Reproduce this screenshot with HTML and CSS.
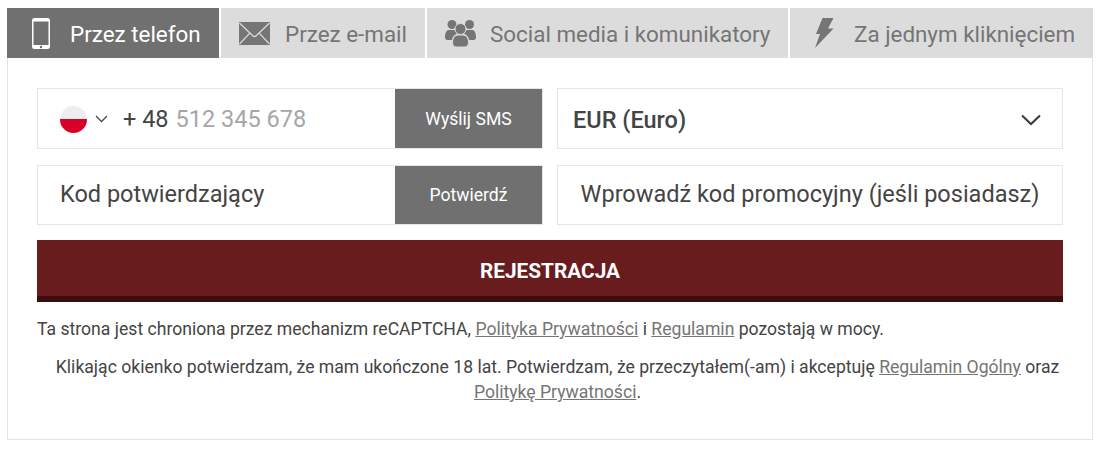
FILE: index.html
```html
<!DOCTYPE html>
<html lang="pl">
<head>
<meta charset="utf-8">
<title>Rejestracja</title>
<link rel="stylesheet" href="styles.css">
</head>
<body>
<div class="widget">
  <nav class="tabs">
    <a class="tab tab-phone active">
      <svg class="ico" width="18" height="31" viewBox="0 0 18 31"><path fill="#fff" fill-rule="evenodd" d="M2.500 0h13A2.500 2.500 0 0 1 18 2.500v26a2.500 2.500 0 0 1-2.500 2.500h-13A2.500 2.500 0 0 1 0 28.500v-26A2.500 2.500 0 0 1 2.500 0zM1.500 3.500v23.500h15V3.500zM9 27.800a1.200 1.200 0 1 0 0 2.400a1.200 1.200 0 0 0 0-2.400z"/></svg>
      <span>Przez telefon</span>
    </a>
    <a class="tab tab-mail">
      <svg class="ico" width="31" height="23" viewBox="0 0 31 23"><rect width="31" height="23" fill="#757575"/><path fill="none" stroke="#dcdcdc" stroke-width="1.200" d="M0.500 1L13.500 13.500Q15.500 15.500 17.500 13.500L30.500 1M0.500 22L10.800 11.200M30.500 22L20.200 11.200"/></svg>
      <span>Przez e-mail</span>
    </a>
    <a class="tab tab-social">
      <svg class="ico" width="31" height="27" viewBox="0 0 31 27"><g fill="#757575"><circle cx="7" cy="4.500" r="4.500"/><circle cx="24.500" cy="4.500" r="4.500"/><path d="M0 17.500C0 12.500 1.500 10 4 10h6c.3 1.500 1 2.800 2 3.800C9 15 7.300 17 6.800 20H2.500C1 20 0 19 0 17.500z"/><path d="M31 17.500C31 12.500 29.500 10 27 10h-6c-.3 1.500-1 2.800-2 3.800 3 1.200 4.700 3.200 5.200 6.200h4.300c1.500 0 2.500-1 2.500-2.500z"/><circle cx="15.500" cy="9" r="5.500" stroke="#dcdcdc" stroke-width="1"/><path stroke="#dcdcdc" stroke-width="1" d="M7.500 22.500c0-4.500 2.500-7.500 5.500-7.500h5c3 0 5.500 3 5.500 7.500 0 2.500-1.500 4.500-3.500 4.500h-9c-2 0-3.500-2-3.500-4.500z"/></g></svg>
      <span>Social media i komunikatory</span>
    </a>
    <a class="tab tab-flash">
      <svg class="ico" width="19" height="30" viewBox="0 0 19 30"><path fill="#757575" d="M7.500 0H18.500L13 10.500H18.500L0 30L5 16H1z"/></svg>
      <span>Za jednym kliknięciem</span>
    </a>
  </nav>
  <form class="panel">
    <div class="fields">
      <div class="field">
        <div class="phone">
          <span class="flag"></span>
          <svg class="chev-sm" width="13" height="8" viewBox="0 0 13 8"><path fill="none" stroke="#4a4a4a" stroke-width="1.300" d="M1 1l5.500 5.500L12 1"/></svg>
          <span class="prefix">+ 48</span>
          <span class="hint">512 345 678</span>
        </div>
        <button type="button" class="side-btn">Wyślij SMS</button>
      </div>
      <div class="field select">
        <strong>EUR (Euro)</strong>
        <svg width="20" height="12" viewBox="0 0 20 12"><path fill="none" stroke="#3a3a3a" stroke-width="2" d="M1 1.500l9 8.500l9-8.500"/></svg>
      </div>
      <div class="field">
        <div class="code">Kod potwierdzający</div>
        <button type="button" class="side-btn">Potwierdź</button>
      </div>
      <div class="field promo">Wprowadź kod promocyjny (jeśli posiadasz)</div>
    </div>
    <button type="button" class="submit">REJESTRACJA</button>
    <p class="note">Ta strona jest chroniona przez mechanizm reCAPTCHA, <a>Polityka Prywatności</a> i <a>Regulamin</a> pozostają w mocy.</p>
    <p class="terms">Klikając okienko potwierdzam, że mam ukończone 18 lat. Potwierdzam, że przeczytałem(-am) i akceptuję <a>Regulamin Ogólny</a> oraz <a>Politykę Prywatności</a>.</p>
  </form>
</div>
</body>
</html>
```
FILE: styles.css
```css
* { box-sizing: border-box; }
html, body { height: 100%; }
body {
  margin: 0;
  padding: 8px 7px 0;
  background: #fff;
  font-family: Roboto, "Liberation Sans", sans-serif;
  color: #444;
}
.widget { width: 1086px; }
.tabs { display: flex; height: 50px; gap: 2px; }
.tab {
  display: flex;
  align-items: center;
  background: #dcdcdc;
  color: #757575;
  font-size: 22.4px;
  white-space: nowrap;
}
.tab span { padding-top: 2px; }
.tab.active { background: #707070; color: #fff; }
.tab-phone { width: 212px; padding-left: 25px; gap: 20px; }
.tab-mail { width: 204px; padding-left: 18px; gap: 15px; }
.tab-social { width: 361px; padding-left: 18px; gap: 14px; }
.tab-flash { width: 303px; padding-left: 25px; gap: 20px; }
.ico { flex: none; }
.panel {
  height: 382px;
  border: 1px solid #e4e4e4;
  border-top: 0;
  padding: 30px 29px 0;
}
.fields {
  display: grid;
  grid-template-columns: 506px 506px;
  grid-template-rows: 61px 60px;
  column-gap: 14px;
  row-gap: 16px;
}
.field {
  display: flex;
  align-items: stretch;
  background: #fff;
  border: 1px solid #e6e6e6;
  font-size: 23.500px;
}
.phone {
  flex: 1;
  display: flex;
  align-items: center;
  padding: 1px 0 0 22px;
}
.flag {
  width: 27px;
  height: 27px;
  border-radius: 50%;
  background: linear-gradient(#eeeeee 50%, #d80027 50%);
}
.chev-sm { margin-left: 8px; }
.prefix { margin-left: 15px; color: #444; }
.hint { margin-left: 7px; color: #a6a6a6; }
.side-btn {
  width: 147px;
  flex: none;
  border: 0;
  padding: 0;
  background: #707070;
  color: #fff;
  font: 400 17.600px Roboto, "Liberation Sans", sans-serif;
}
.select {
  justify-content: space-between;
  align-items: center;
  padding: 3px 21px 0 15px;
}
.select strong { font-weight: 500; font-size: 23.500px; color: #444; }
.code { flex: 1; display: flex; align-items: center; padding: 0 0 2px 22px; }
.promo { align-items: center; justify-content: center; padding-bottom: 2px; }
.submit {
  display: block;
  width: 100%;
  height: 62px;
  margin-top: 15px;
  border: 0;
  border-bottom: 6px solid #3d0d0d;
  background: #681c1e;
  color: #fff;
  font: 700 20.800px Roboto, "Liberation Sans", sans-serif;
  padding: 6px 0 0;
}
p { margin: 0; font-size: 17.600px; line-height: 25px; color: #444; }
p a { color: #757575; text-decoration: underline; }
.note { margin-top: 15px; }
.terms { margin-top: 13px; text-align: center; padding-left: 15px; }
```
